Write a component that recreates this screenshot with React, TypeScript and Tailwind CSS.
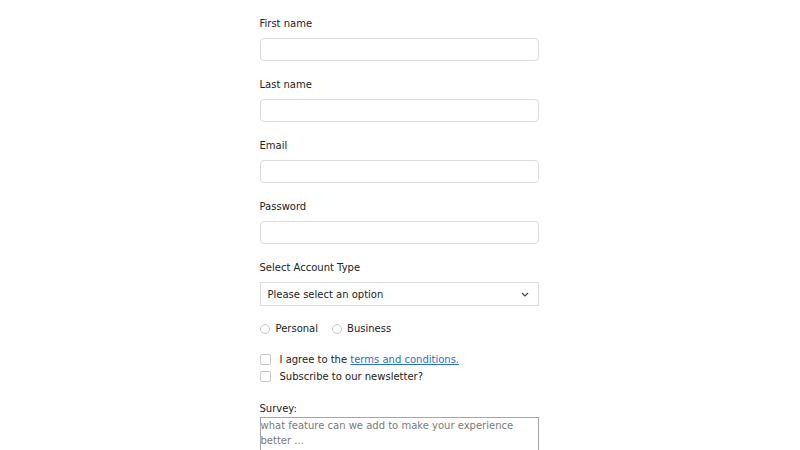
import React from "react";

function Field({ label, type = "text" }: { label: string; type?: string }) {
  return (
    <div className="mb-[15px]">
      <label className="mb-[7px] block h-[16px] pt-[1px]">{label}</label>
      <input
        type={type}
        className="block h-[23px] w-full rounded-[4px] border border-[#dcdcdc] bg-white px-2 outline-none"
      />
    </div>
  );
}

export default function App() {
  return (
    <div
      className="min-h-[450px] bg-white text-[10px] leading-[15px] text-[#222]"
      style={{ fontFamily: '"DejaVu Sans", sans-serif' }}
    >
      <form className="mx-auto w-[281px] pt-[15px] pr-[2px]">
        <Field label="First name" />
        <Field label="Last name" />
        <Field label="Email" type="email" />
        <Field label="Password" type="password" />

        <div className="mb-[15px]">
          <label className="mb-[7px] block h-[16px] pt-[1px]">Select Account Type</label>
          <div className="flex h-[24px] w-full items-center justify-between border border-[#dcdcdc] bg-white pl-[7px] pr-[9px]">
            <span>Please select an option</span>
            <svg width="8" height="5" viewBox="0 0 8 5" fill="none">
              <path d="M1 1l3 3 3-3" stroke="#444" strokeWidth="1.2" />
            </svg>
          </div>
        </div>

        <div className="mb-4 flex h-[15px] items-center">
          <span className="mr-[6px] h-[10px] w-[10px] rounded-full border border-[#c8c8c8]" />
          <span className="mr-[14px]">Personal</span>
          <span className="mr-[5px] h-[10px] w-[10px] rounded-full border border-[#c8c8c8]" />
          <span>Business</span>
        </div>

        <div className="mb-[2px] flex h-[15px] items-center">
          <span className="mr-[9px] h-[11px] w-[11px] rounded-[2px] border border-[#c8c8c8]" />
          <span>
            I agree to the{" "}
            <a className="text-[#2a6fc9] underline">terms and conditions.</a>
          </span>
        </div>
        <div className="mb-[17px] flex h-[15px] items-center">
          <span className="mr-[9px] h-[11px] w-[11px] rounded-[2px] border border-[#c8c8c8]" />
          <span>Subscribe to our newsletter?</span>
        </div>

        <label className="mb-[1px] block h-[15px]">Survey:</label>
        <textarea
          className="block h-[60px] w-full resize-none border border-[#a6a6a6] p-0 text-[10px] leading-[15px] outline-none placeholder:text-[#7a7a7a]"
          placeholder="what feature can we add to make your experience better ..."
        />
      </form>
    </div>
  );
}
